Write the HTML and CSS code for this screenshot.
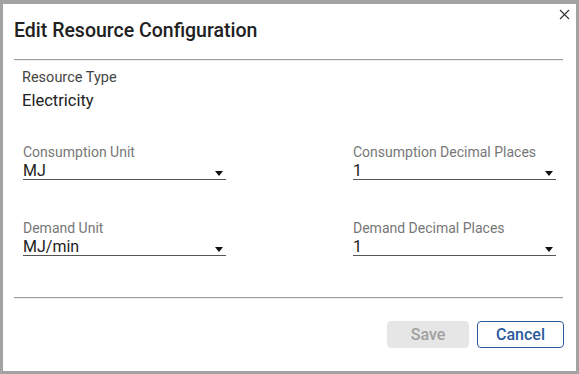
FILE: index.html
```html
<!DOCTYPE html>
<html>
<head>
<meta charset="utf-8">
<link rel="stylesheet" href="styles.css">
</head>
<body>
<div class="dialog">
  <div class="header">
    <h1 class="title">Edit Resource Configuration</h1>
    <button class="close" aria-label="Close">
      <svg width="11" height="11" viewBox="0 0 11 11"><path d="M1 1 L10 10 M10 1 L1 10" stroke="#333" stroke-width="1.1" fill="none"/></svg>
    </button>
  </div>
  <div class="divider"></div>
  <div class="body">
    <div class="resource">
      <div class="res-label">Resource Type</div>
      <div class="res-value">Electricity</div>
    </div>
    <div class="grid">
      <div class="field">
        <div class="label">Consumption Unit</div>
        <div class="select"><span class="value">MJ</span><span class="arrow"></span></div>
      </div>
      <div class="field">
        <div class="label">Consumption Decimal Places</div>
        <div class="select"><span class="value">1</span><span class="arrow"></span></div>
      </div>
      <div class="field">
        <div class="label">Demand Unit</div>
        <div class="select"><span class="value">MJ/min</span><span class="arrow"></span></div>
      </div>
      <div class="field">
        <div class="label">Demand Decimal Places</div>
        <div class="select"><span class="value">1</span><span class="arrow"></span></div>
      </div>
    </div>
  </div>
  <div class="divider bottom"></div>
  <div class="footer">
    <button class="btn save">Save</button>
    <button class="btn cancel">Cancel</button>
  </div>
</div>
</body>
</html>
```
FILE: styles.css
```css
html, body {
  margin: 0;
  padding: 0;
  background: #ffffff;
}
body {
  font-family: Roboto, "Liberation Sans", sans-serif;
  color: #212121;
}
.dialog {
  width: 579px;
  height: 374px;
  box-sizing: border-box;
  border-style: solid;
  border-color: #a3a3a3;
  border-width: 4px 3px 3px 3px;
  background: #fff;
  position: relative;
}
.header {
  height: 55px;
  padding: 16px 0 0 11px;
  box-sizing: border-box;
}
.title {
  margin: 0;
  font-size: 19.5px;
  line-height: 22px;
  font-weight: 500;
  color: #212121;
}
.close {
  position: absolute;
  top: 4px;
  right: 5px;
  width: 13px;
  height: 13px;
  padding: 1px;
  border: 0;
  background: transparent;
  display: flex;
  align-items: center;
  justify-content: center;
}
.divider {
  margin: 0 13px 0 11px;
  border-top: 1px solid #9c9c9c;
  height: 1px;
  background: #ececec;
}
.body {
  padding: 9px 0 0 20px;
  height: 236px;
  box-sizing: border-box;
}
.resource {
  margin-left: -1px;
}
.res-label {
  font-size: 14.5px;
  line-height: 16px;
  color: #444;
}
.res-value {
  margin-top: 5px;
  font-size: 16.5px;
  line-height: 19px;
  color: #212121;
}
.grid {
  margin-top: 34px;
  display: grid;
  grid-template-columns: 203px 203px;
  column-gap: 127px;
  row-gap: 40px;
}
.label {
  font-size: 14px;
  line-height: 16px;
  color: #777;
}
.select {
  height: 20px;
  box-sizing: border-box;
  padding-top: 3px;
  border-bottom: 1px solid #555;
  display: flex;
  justify-content: space-between;
  align-items: flex-start;
}
.value {
  font-size: 16px;
  line-height: 16px;
  color: #212121;
}
.arrow {
  width: 0;
  height: 0;
  margin: 8px 3px 0 0;
  border-left: 4.5px solid transparent;
  border-right: 4.5px solid transparent;
  border-top: 5px solid #111;
}
.footer {
  display: flex;
  justify-content: flex-end;
  gap: 8px;
  padding: 22px 12px 0 0;
}
.btn {
  height: 27px;
  box-sizing: border-box;
  font-family: Roboto, "Liberation Sans", sans-serif;
  font-size: 16px;
  font-weight: 500;
  border-radius: 4px;
  padding: 0;
}
.save {
  width: 82px;
  background: #e6e6e6;
  color: #a0a0a0;
  border: 1px solid #e6e6e6;
}
.cancel {
  width: 87px;
  background: #fff;
  color: #2b5a9c;
  border: 1px solid #2b5a9c;
}
```
